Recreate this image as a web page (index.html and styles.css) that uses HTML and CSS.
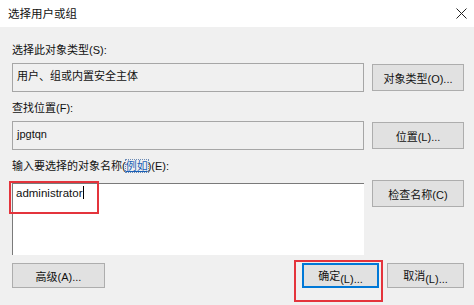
FILE: index.html
```html
<!DOCTYPE html>
<html lang="zh-CN">
<head>
<meta charset="utf-8"/>
<title>选择用户或组</title>
<link rel="stylesheet" href="styles.css">
</head>
<body>

<div class="dialog">
  <!-- Title bar -->
  <div class="titlebar">
    <span class="title">选择用户或组</span>
    <svg class="close" width="11" height="11" viewBox="0 0 11 11"><path d="M0.5 0.5L10.5 10.5M10.5 0.5L0.5 10.5" stroke="#222" stroke-width="1"/></svg>
  </div>

  <!-- Body -->
  <div class="body">
    <div class="label">选择此对象类型(S):</div>
    <div class="row">
      <div class="field">用户、组或内置安全主体</div>
      <button class="btn">对象类型(O)...</button>
    </div>

    <div class="label">查找位置(F):</div>
    <div class="row">
      <div class="field">jpgtqn</div>
      <button class="btn">位置(L)...</button>
    </div>

    <div class="label">输入要选择的对象名称(<a class="link">例如</a>)(E):</div>
    <div class="row">
      <div class="names">administrator<span class="caret"></span></div>
      <button class="btn">检查名称(C)</button>
    </div>

    <div class="footer">
      <button class="btn small">高级(A)...</button>
      <div class="actions">
        <button class="btn small default">确定<sub>(L)...</sub></button>
        <button class="btn small">取消<sub>(L)...</sub></button>
      </div>
    </div>
  </div>

  <!-- annotations -->
  <div class="mark mark-name"></div>
  <div class="mark mark-ok"></div>
</div>

</body>
</html>
```

FILE: styles.css
```css
/* ======== Reset ======== */
* {
  box-sizing: border-box;
  margin: 0;
  padding: 0;
}

body {
  background: #f0f0f0;
  font-family: "Liberation Sans", "Noto Sans CJK SC", sans-serif;
  font-size: 11px;
  color: #111;
}

/* ======== Dialog ======== */
.dialog {
  position: relative;
  width: 474px;
  height: 305px;
  overflow: hidden;
  background: #f0f0f0;
}

.titlebar {
  display: flex;
  justify-content: space-between;
  align-items: center;
  height: 27px;
  padding: 0 7px 1px 8px;
  background: #fff;
}

.title {
  font-size: 11.5px;
}

.body {
  padding: 15px 10px 0 12px;
}

.label {
  height: 16px;
  line-height: 16px;
  margin-bottom: 5px;
}

.link {
  color: #1a5fb4;
  text-decoration: underline;
  outline: 1px dotted #6a8ab5;
}

.row {
  display: grid;
  grid-template-columns: 352px 92px;
  column-gap: 8px;
  align-items: start;
  margin-bottom: 8px;
}

.field {
  height: 29px;
  padding: 0 4px;
  line-height: 25px;
  border: 1px solid #a6a6a6;
  background: #f0f0f0;
}

.names {
  height: 72px;
  margin-top: 4px;
  padding: 1px 3px;
  line-height: 16px;
  font-size: 11.5px;
  background: #fff;
  border-top: 1px solid #7a7a7a;
  border-left: 1px solid #7a7a7a;
}

.caret {
  display: inline-block;
  width: 1px;
  height: 13px;
  margin-left: 1px;
  vertical-align: -2px;
  background: #000;
}

/* ======== Buttons ======== */
.btn {
  height: 27px;
  margin-top: 1px;
  font: inherit;
  color: #111;
  background: #e1e1e1;
  border: 1px solid #adadad;
}

.row:last-of-type .btn {
  margin-top: 6px;
}

.btn.small {
  height: 25px;
  width: 93px;
  margin-top: 0;
}

.btn sub {
  font-size: 11px;
  vertical-align: -3px;
}

.btn.default {
  width: 77px;
  border: 2px solid #0078d7;
}

.footer {
  display: flex;
  justify-content: space-between;
  margin-top: 6px;
}

.actions {
  display: flex;
  gap: 8px;
}

.actions .btn:last-child {
  width: 77px;
}

/* ======== Red annotation boxes ======== */
.mark {
  position: absolute;
  border: 2px solid #e4343c;
}

.mark-name {
  left: 9px;
  top: 181px;
  width: 90px;
  height: 33px;
}

.mark-ok {
  left: 294px;
  top: 260px;
  width: 89px;
  height: 42px;
}
```
